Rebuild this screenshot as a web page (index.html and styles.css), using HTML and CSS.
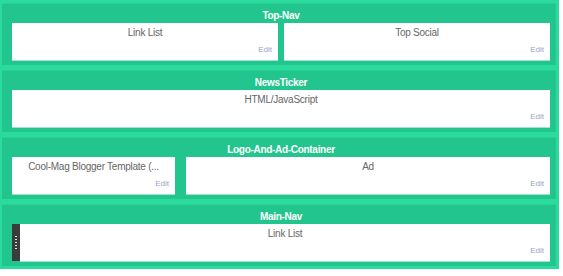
FILE: index.html
```html
<!DOCTYPE html>
<html lang="en">
<head>
    <meta charset="utf-8">
    <title>Layout</title>
    <link rel="stylesheet" href="styles.css">
</head>
<body>

<div class="layout">

    <!-- Top-Nav -->
    <div class="section">
        <div class="section-title">Top-Nav</div>
        <div class="row">
            <div class="widget half">
                <span class="widget-name">Link List</span>
                <a class="edit">Edit</a>
            </div>
            <div class="widget half">
                <span class="widget-name">Top Social</span>
                <a class="edit">Edit</a>
            </div>
        </div>
    </div>

    <!-- NewsTicker -->
    <div class="section">
        <div class="section-title">NewsTicker</div>
        <div class="row">
            <div class="widget full">
                <span class="widget-name">HTML/JavaScript</span>
                <a class="edit">Edit</a>
            </div>
        </div>
    </div>

    <!-- Logo-And-Ad-Container -->
    <div class="section">
        <div class="section-title">Logo-And-Ad-Container</div>
        <div class="row wide-gap">
            <div class="widget logo">
                <span class="widget-name">Cool-Mag Blogger Template (...</span>
                <a class="edit">Edit</a>
            </div>
            <div class="widget full">
                <span class="widget-name">Ad</span>
                <a class="edit">Edit</a>
            </div>
        </div>
    </div>

    <!-- Main-Nav -->
    <div class="section">
        <div class="section-title">Main-Nav</div>
        <div class="row">
            <div class="handle">
                <span></span><span></span><span></span><span></span><span></span>
            </div>
            <div class="widget full">
                <span class="widget-name">Link List</span>
                <a class="edit">Edit</a>
            </div>
        </div>
    </div>

</div>

</body>
</html>
```

FILE: styles.css
```css
/* zakladne nastavenia */
* {
    box-sizing: border-box;
}

body {
    margin: 0;
    background: #ffffff;
    font-family: "Liberation Sans", Arial, sans-serif;
}

/* vonkajsi zeleny ram */
.layout {
    width: 559px;
    padding: 3px 3px 3px 2px;
    background: #2bdb9e;
    display: flex;
    flex-direction: column;
    gap: 5px;
}

/* jedna sekcia */
.section {
    background: #22c58d;
    height: 62px;
    padding: 0 6px 5px 10px;
    border-top: 1px solid #28d196;
}

.section-title {
    height: 19px;
    padding-top: 2px;
    line-height: 19px;
    text-align: center;
    color: #ffffff;
    font-size: 10px;
    font-weight: bold;
    letter-spacing: -0.3px;
}

.row {
    display: flex;
    gap: 6px;
    height: 37px;
}

.row.wide-gap {
    gap: 11px;
}

/* biela krabica pre widget */
.widget {
    position: relative;
    background: #ffffff;
    box-shadow: 0 1px 0 #9fe6cc;
    text-align: center;
}

.half {
    flex: 1;
}

.full {
    flex: 1;
}

.logo {
    width: 163px;
}

.widget-name {
    display: block;
    padding-top: 4px;
    font-size: 10px;
    letter-spacing: -0.25px;
    color: #666666;
}

.edit {
    position: absolute;
    right: 6px;
    bottom: 6px;
    font-size: 8px;
    color: #9aa3bd;
}

/* tmavy uchop pri Main-Nav */
.handle {
    width: 8px;
    margin-right: -6px;
    background: #3b3b3b;
    display: flex;
    flex-direction: column;
    align-items: center;
    justify-content: center;
    gap: 2px;
}

.handle span {
    width: 2px;
    height: 1px;
    background: #e0e0e0;
}
```
